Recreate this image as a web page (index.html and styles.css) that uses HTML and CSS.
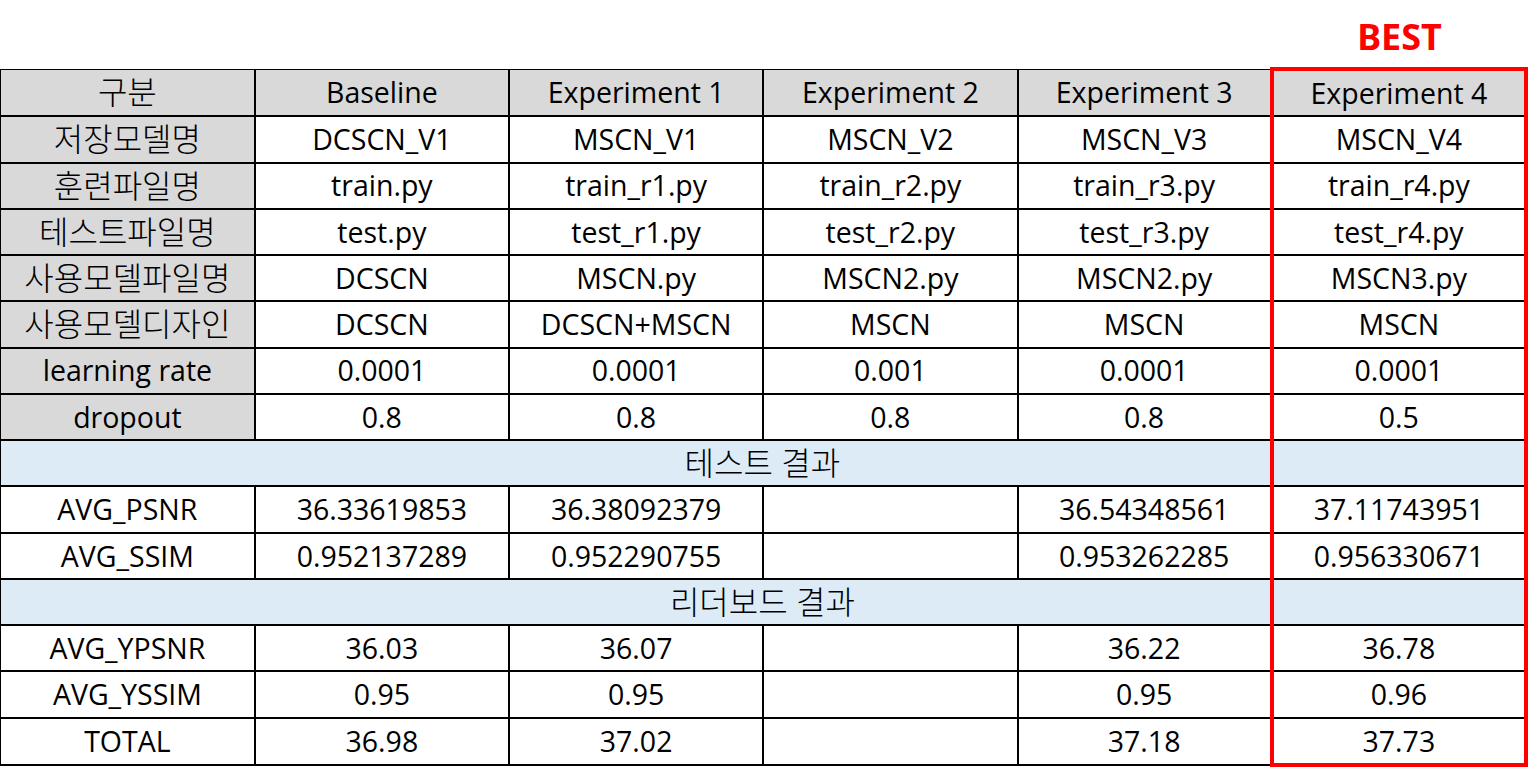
FILE: index.html
```html
<!DOCTYPE html>
<html lang="ko">
<head>
<meta charset="utf-8">
<link rel="stylesheet" href="styles.css">
</head>
<body>
<div class="page">
  <div class="top">
    <div class="spacer"></div>
    <div class="best">BEST</div>
  </div>
  <table class="grid">
    <colgroup>
      <col class="c"><col class="c"><col class="c"><col class="c"><col class="c"><col class="c">
    </colgroup>
    <tbody>
      <tr class="first">
        <th class="head ko">구분</th>
        <th class="head">Baseline</th>
        <th class="head">Experiment 1</th>
        <th class="head">Experiment 2</th>
        <th class="head">Experiment 3</th>
        <th class="head hl">Experiment 4</th>
      </tr>
      <tr><th class="head ko">저장모델명</th><td>DCSCN_V1</td><td>MSCN_V1</td><td>MSCN_V2</td><td>MSCN_V3</td><td class="hl">MSCN_V4</td></tr>
      <tr><th class="head ko">훈련파일명</th><td>train.py</td><td>train_r1.py</td><td>train_r2.py</td><td>train_r3.py</td><td class="hl">train_r4.py</td></tr>
      <tr><th class="head ko">테스트파일명</th><td>test.py</td><td>test_r1.py</td><td>test_r2.py</td><td>test_r3.py</td><td class="hl">test_r4.py</td></tr>
      <tr><th class="head ko">사용모델파일명</th><td>DCSCN</td><td>MSCN.py</td><td>MSCN2.py</td><td>MSCN2.py</td><td class="hl">MSCN3.py</td></tr>
      <tr><th class="head ko">사용모델디자인</th><td>DCSCN</td><td>DCSCN+MSCN</td><td>MSCN</td><td>MSCN</td><td class="hl">MSCN</td></tr>
      <tr><th class="head">learning rate</th><td>0.0001</td><td>0.0001</td><td>0.001</td><td>0.0001</td><td class="hl">0.0001</td></tr>
      <tr><th class="head">dropout</th><td>0.8</td><td>0.8</td><td>0.8</td><td>0.8</td><td class="hl">0.5</td></tr>
      <tr class="section"><td colspan="5" class="sec-label ko"><span class="sec-text">테스트 결과</span></td><td class="hl"></td></tr>
      <tr><td>AVG_PSNR</td><td>36.33619853</td><td>36.38092379</td><td></td><td>36.54348561</td><td class="hl">37.11743951</td></tr>
      <tr><td>AVG_SSIM</td><td>0.952137289</td><td>0.952290755</td><td></td><td>0.953262285</td><td class="hl">0.956330671</td></tr>
      <tr class="section"><td colspan="5" class="sec-label ko"><span class="sec-text">리더보드 결과</span></td><td class="hl"></td></tr>
      <tr><td>AVG_YPSNR</td><td>36.03</td><td>36.07</td><td></td><td>36.22</td><td class="hl">36.78</td></tr>
      <tr><td>AVG_YSSIM</td><td>0.95</td><td>0.95</td><td></td><td>0.95</td><td class="hl">0.96</td></tr>
      <tr class="last"><td>TOTAL</td><td>36.98</td><td>37.02</td><td></td><td>37.18</td><td class="hl">37.73</td></tr>
    </tbody>
  </table>
</div>
</body>
</html>
```
FILE: styles.css
```css
html, body {
  margin: 0;
  padding: 0;
  background: #ffffff;
}
body {
  font-family: "Open Sans", "Noto Sans CJK KR", sans-serif;
  color: #000;
}
.page {
  width: 1530px;
}
.top {
  display: grid;
  grid-template-columns: 1271px 257px;
  height: 67px;
}
.best {
  color: #ff0000;
  font-family: "Noto Sans", "Open Sans", sans-serif;
  font-weight: 700;
  font-size: 36px;
  text-align: center;
  line-height: 1;
  padding-top: 19px;
}
.grid {
  border-collapse: collapse;
  table-layout: fixed;
  width: 1528px;
}
.grid .c {
  width: 254px;
}
.grid th,
.grid td {
  border: 2px solid #000;
  height: 44.27px;
  padding: 0;
  text-align: center;
  vertical-align: middle;
  font-size: 28.5px;
  font-weight: 400;
  line-height: 1;
  white-space: nowrap;
}
.grid .ko {
  font-size: 32px;
  font-weight: 300;
}
.grid .head {
  background: #d9d9d9;
}
.grid tr.first th {
  border-top-width: 1px;
}
.grid tr > :first-child {
  border-left-width: 1px;
}
.grid .section td {
  background: #ddebf7;
}
.grid .sec-label {
  border-right: none;
}
.sec-text {
  display: inline-block;
  padding-left: 254px;
}
.grid .hl {
  border-left: 4px solid #ff0000;
  border-right: 4px solid #ff0000;
}
.grid tr.first .hl {
  border-top: 4px solid #ff0000;
}
.grid tr.last .hl {
  border-bottom: 4px solid #ff0000;
}
```
